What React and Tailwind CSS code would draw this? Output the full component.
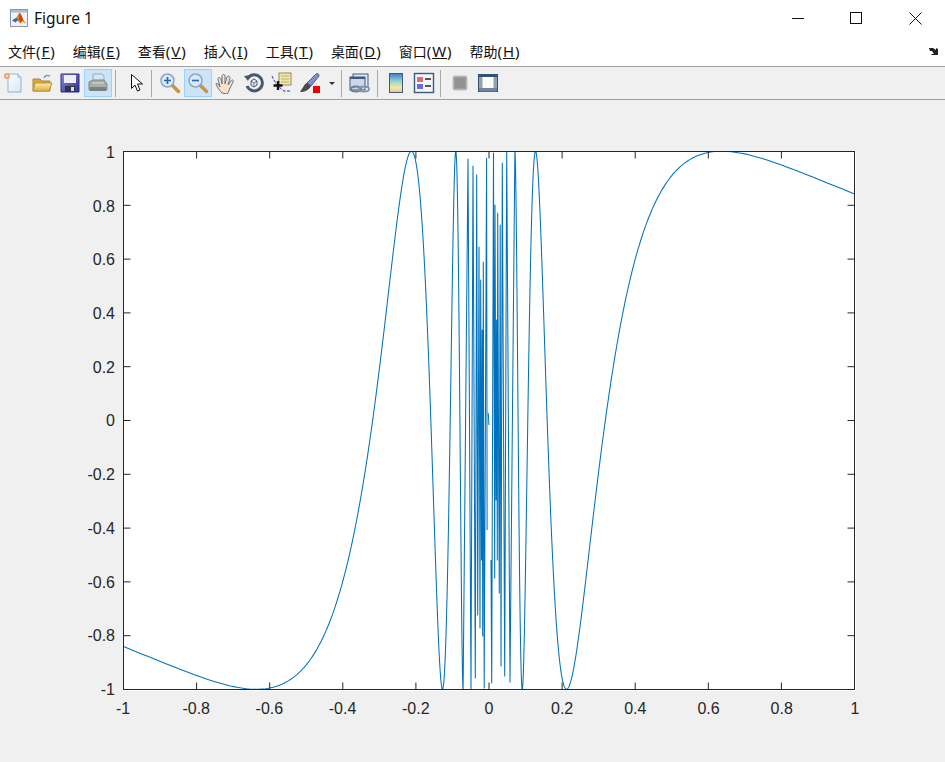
import React from "react";

const MENUS = [["文件", "F"], ["编辑", "E"], ["查看", "V"], ["插入", "I"], ["工具", "T"], ["桌面", "D"], ["窗口", "W"], ["帮助", "H"]];
const XL = ["-1", "-0.8", "-0.6", "-0.4", "-0.2", "0", "0.2", "0.4", "0.6", "0.8", "1"];
const YL = ["1", "0.8", "0.6", "0.4", "0.2", "0", "-0.2", "-0.4", "-0.6", "-0.8", "-1"];

const px = (x) => 123.5 + 365.5 * (x + 1);
const py = (y) => 421.25 - 269 * y;

function side(a, b, n) {
  const pts = [];
  for (let i = 0; i <= n; i++) {
    const u = 1 / a + (1 / b - 1 / a) * (i / n);
    const x = 1 / u;
    pts.push(`${px(x).toFixed(2)},${py(Math.sin(u)).toFixed(2)}`);
  }
  return pts;
}

const fmt = (list) => list.map(([x, y]) => `${x},${y + 1}`);

const LEFT = [
  [468, 159], [471, 689], [473, 166], [475.3, 678], [476.7, 175], [477.7, 615], [479, 247], [480, 628],
  [480.7, 280], [481.5, 560], [482.2, 330], [482.7, 636], [483.3, 262], [484.2, 688], [486.6, 158], [487.1, 530],
];
const RIGHT = [
  [491, 560], [491.7, 683], [493.5, 153], [494.7, 578], [495, 205], [496, 500], [496.6, 320], [497.3, 560],
  [497.7, 213], [498.7, 480], [499.3, 593], [500.2, 225], [501, 666], [502.3, 163], [504.7, 676], [506.7, 150], [510, 682],
];

const CURVE_LEFT = [...side(-1, -0.0708, 700), ...fmt(LEFT)].join(" ");
const CURVE_RIGHT = [...fmt(RIGHT), ...side(0.0708, 1, 700)].join(" ");

function Btn({ active, children }) {
  return (
    <div className={"flex h-[28px] w-[28px] shrink-0 items-center justify-center border " + (active ? "border-[#99d1ff] bg-[#cce4f7]" : "border-transparent")}>
      <svg width="22" height="22" viewBox="0 0 22 22">{children}</svg>
    </div>
  );
}

function Sep({ className }) {
  return <div className={"h-[27px] w-px shrink-0 bg-[#a8a8a8] " + className} />;
}

function Plot() {
  const xt = XL.map((_, i) => 123.5 + i * 73.1);
  const yt = YL.map((_, i) => 152.5 + i * 53.8);
  return (
    <svg width="733" height="540" viewBox="123 152 733 540" className="block shrink-0 bg-white">
      <polyline points={CURVE_LEFT} fill="none" stroke="#0072bd" strokeWidth="1.05" strokeLinejoin="round" />
      <polyline points={CURVE_RIGHT} fill="none" stroke="#0072bd" strokeWidth="1.05" strokeLinejoin="round" />
      <path d="M488.2 414L489 426" fill="none" stroke="#0072bd" strokeWidth="1.05" />
      <rect x="123.5" y="152.5" width="731" height="538" fill="none" stroke="#262626" strokeWidth="1" />
      {xt.map((x, i) => (
        <path key={i} d={`M${x} 152.5v7M${x} 690.5v-7`} stroke="#262626" fill="none" />
      ))}
      {yt.map((y, i) => (
        <path key={i} d={`M123.5 ${y}h7M854.5 ${y}h-7`} stroke="#262626" fill="none" />
      ))}
    </svg>
  );
}

export default function App() {
  return (
    <div className="flex h-[762px] w-[945px] flex-col overflow-hidden bg-[#f0f0f0] font-['Liberation_Sans',sans-serif]">
      <div className="flex h-[40px] shrink-0 items-center bg-white pl-[10px]">
        <svg width="18" height="18" viewBox="0 0 18 18" className="mb-[4px]">
          <rect x="0.5" y="0.5" width="17" height="17" fill="#eef3f9" stroke="#8a97a8" />
          <rect x="1" y="1" width="16" height="2.5" fill="#a9bdd6" />
          <path d="M2 11.5l4-2.5 3.5-5.5 2 3 2 4.5 2.5 4-3.5-2.5-2 2-3-3z" fill="#e8801f" />
          <path d="M2 11.5l4-2.5 2.5 1.5-3 3z" fill="#2f6fb2" />
          <path d="M9.5 3.5l2 3 1.5 4-2 3-2-3z" fill="#c9431c" />
        </svg>
        <span className="ml-[6px] mb-[3px] text-[15.5px] text-[#111] font-['Noto_Sans',sans-serif]">Figure 1</span>
        <div className="ml-auto mb-[4px] flex">
          <div className="flex h-[32px] w-[58px] items-center justify-center">
            <div className="h-px w-[12px] bg-[#111]" />
          </div>
          <div className="flex h-[32px] w-[58px] items-center justify-center">
            <div className="h-[12px] w-[12px] border border-[#111]" />
          </div>
          <div className="flex h-[32px] w-[60px] items-center justify-center">
            <svg width="13" height="13" viewBox="0 0 13 13"><path d="M.5.5l12 12M12.5.5l-12 12" stroke="#111" fill="none" /></svg>
          </div>
        </div>
      </div>

      <div className="flex h-[27px] shrink-0 items-center gap-[17px] border-b border-[#a0a0a0] bg-white pl-[8px] pb-[4px] text-[14px] text-[#111] font-['Noto_Sans','Noto_Sans_CJK_SC',sans-serif]">
        {MENUS.map(([t, k]) => (
          <span key={t} className="whitespace-nowrap">
            {t}
            <span className="text-[15px] tracking-[0.95px]">
              (<span className="underline">{k}</span>)
            </span>
          </span>
        ))}
        <svg width="10" height="8" viewBox="0 0 10 8" className="ml-auto mr-[6px]">
          <path d="M0 1h4l3 2V1l2 1v6H3l-1-1h3L3 4H1z" fill="#222" />
        </svg>
      </div>

      <div className="flex h-[33px] shrink-0 items-center border-b border-[#a0a0a0] bg-[#f0f0f0] text-[0px]">
        <Btn>
          <defs>
            <linearGradient id="pg" x1="0" y1="0" x2="1" y2="1">
              <stop offset="0" stopColor="#ffffff" />
              <stop offset="1" stopColor="#d5e6f7" />
            </linearGradient>
            <linearGradient id="fl" x1="0" y1="0" x2="0" y2="1">
              <stop offset="0" stopColor="#fbeca0" />
              <stop offset="1" stopColor="#e0b040" />
            </linearGradient>
            <linearGradient id="sv" x1="0" y1="0" x2="1" y2="1">
              <stop offset="0" stopColor="#8a8fe0" />
              <stop offset="1" stopColor="#2a2e90" />
            </linearGradient>
          </defs>
          <path d="M5 2h10l3 3v15H5z" fill="url(#pg)" stroke="#8fb3d9" />
          <path d="M15 2v3h3" fill="#dbe9f7" stroke="#8fb3d9" />
          <circle cx="4" cy="4" r="3" fill="#f0a070" />
          <circle cx="4" cy="4" r="1.2" fill="#f9dcc0" />
        </Btn>
        <Btn>
          <path d="M2 7h7l2 2h8v10H2z" fill="#d8a93a" stroke="#a8873a" />
          <path d="M2 19l2-8h17l-3 8z" fill="url(#fl)" stroke="#b8953a" />
          <path d="M13 6c1-3 4-3 6-2" fill="none" stroke="#7f9cb8" strokeWidth="1.5" />
        </Btn>
        <Btn>
          <path d="M2 2h18v18H2z" fill="url(#sv)" stroke="#2d2e7a" />
          <rect x="5" y="3" width="12" height="8" fill="#eeeef6" />
          <rect x="6" y="14" width="10" height="6" fill="#33334a" />
          <rect x="12" y="15" width="3" height="4" fill="#ddd" />
        </Btn>
        <Btn active>
          <path d="M6 2h9l2 2v6H6z" fill="#d6e6f2" stroke="#9aa8b0" />
          <path d="M2 10l4-2h11l3 4v6H2z" fill="#a8adad" stroke="#808484" />
          <path d="M3 15h16v4H3z" fill="#7b8080" />
          <path d="M5 11h12" stroke="#d8dcdc" />
        </Btn>
        <Sep className="ml-[3px] mr-[6px]" />
        <Btn>
          <path d="M6.5 2.5v14l3.5-3.5 2.5 6 2.5-1-2.5-6h5z" fill="#fff" stroke="#111" />
        </Btn>
        <Sep className="ml-[1px] mr-[4px]" />
        <Btn>
          <path d="M12.5 12.5l7 7" stroke="#d0923e" strokeWidth="3.5" strokeLinecap="round" />
          <circle cx="8.5" cy="8.5" r="6.5" fill="#d8e9f8" stroke="#8aa7c4" strokeWidth="1.5" />
          <path d="M5 8.5h7M8.5 5v7" stroke="#2a63a8" strokeWidth="1.6" />
        </Btn>
        <Btn active>
          <path d="M12.5 12.5l7 7" stroke="#d0923e" strokeWidth="3.5" strokeLinecap="round" />
          <circle cx="8.5" cy="8.5" r="6.5" fill="#d8e9f8" stroke="#8aa7c4" strokeWidth="1.5" />
          <path d="M5 8.5h7" stroke="#2a63a8" strokeWidth="1.6" />
        </Btn>
        <Btn>
          <path d="M7 21c-2-2-5-6-6-9 0-1 2-1 3 1l1 2-2-8c0-2 2-2 3 0l1 5 0-8c0-2 3-2 3 0l0 8 2-7c1-2 3-1 3 1l-2 7 3-4c1-2 3-1 2 1l-3 6c-1 3-2 5-3 6z" fill="#fbe0cc" stroke="#6a6f7a" />
        </Btn>
        <Btn>
          <path d="M5 6a8 8 0 1 1-1 8" fill="none" stroke="#47596f" strokeWidth="3" />
          <path d="M1 4l7-1-3 6z" fill="#47596f" />
          <path d="M8 9l3-2 3 2v4l-3 2-3-2z" fill="#e8eef5" stroke="#47596f" />
          <path d="M11 11v4M8 9l3 2 3-2" fill="none" stroke="#47596f" strokeWidth=".8" />
        </Btn>
        <Btn>
          <rect x="8" y="1" width="12" height="12" fill="#f2e9a8" stroke="#8f8a60" />
          <path d="M10 4h8M10 7h8M10 10h8" stroke="#b5ad6d" />
          <path d="M1 4c2 5 6 11 12 15l7 0" fill="none" stroke="#2a2ae0" strokeDasharray="3 1.5" />
          <path d="M7 9v9M2.5 13.5h9" stroke="#111" strokeWidth="2.4" />
        </Btn>
        <Btn>
          <path d="M8 11l9-9c2-1 3 0 3 2l-8 10z" fill="#7f8fd0" stroke="#4f5a8a" />
          <path d="M8 11c-3 1-4 5-7 9 5 0 9-2 11-6z" fill="#4a4a4a" />
          <rect x="14" y="14" width="7" height="7" fill="#ee0000" />
        </Btn>
        <div className="ml-[5px] mr-[3px] w-0 border-x-[3px] border-t-[3px] border-x-transparent border-t-[#333]" />
        <Sep className="ml-[3px] mr-[4px]" />
        <Btn>
          <rect x="4" y="2" width="15" height="13" fill="#dfe8f3" stroke="#3f5a80" />
          <rect x="1" y="5" width="15" height="13" fill="#c9d8ea" stroke="#3f5a80" />
          <path d="M1 5h15v2H1z" fill="#3f5a80" />
          <ellipse cx="7" cy="17" rx="5" ry="2.5" fill="none" stroke="#6d7f96" strokeWidth="2" />
          <ellipse cx="15" cy="17" rx="5" ry="2.5" fill="none" stroke="#8795a8" strokeWidth="2" />
        </Btn>
        <Sep className="ml-[3px] mr-[4px]" />
        <Btn>
          <defs>
            <linearGradient id="cb" x1="0" y1="0" x2="0" y2="1">
              <stop offset="0" stopColor="#3f78d8" />
              <stop offset=".45" stopColor="#9fdcc8" />
              <stop offset=".75" stopColor="#f6e8a0" />
              <stop offset="1" stopColor="#f4b8a0" />
            </linearGradient>
          </defs>
          <rect x="4.5" y="1.5" width="13" height="19" fill="url(#cb)" stroke="#3f5a80" />
        </Btn>
        <Btn>
          <rect x="1.5" y="1.5" width="19" height="19" fill="#f4f6fa" stroke="#3f5a80" strokeWidth="1.4" />
          <rect x="4" y="5" width="6" height="5" fill="#e86a6a" />
          <rect x="4" y="12" width="6" height="5" fill="#6a6ae8" />
          <path d="M12 7h6M12 14h6" stroke="#222" strokeWidth="1.4" />
        </Btn>
        <Sep className="ml-[2px] mr-[5px]" />
        <Btn>
          <rect x="4" y="4" width="14" height="14" rx="1.5" fill="#a0a0a0" stroke="#c4c4c4" />
          <rect x="6" y="6" width="10" height="10" fill="#929292" />
        </Btn>
        <Btn>
          <rect x="1.5" y="2.5" width="19" height="17" fill="#fdfdf8" stroke="#33506f" />
          <rect x="1.5" y="2.5" width="19" height="2.5" fill="#33506f" />
          <rect x="2" y="5" width="3.5" height="11" fill="#8fa2b8" />
          <rect x="16.5" y="5" width="3.5" height="11" fill="#8fa2b8" />
          <rect x="2" y="16" width="18" height="3.5" fill="#6f86a0" />
        </Btn>
      </div>

      <div className="flex flex-col pt-[51px] text-[16px] text-[#262626]">
        <div className="flex">
          <div className="flex h-[540px] w-[123px] shrink-0 flex-col justify-between pb-[1px] pr-[8px] pt-[2px]">
            {YL.map((t) => (
              <div key={t} className="flex h-0 items-center justify-end whitespace-nowrap">{t}</div>
            ))}
          </div>
          <Plot />
        </div>
        <div className="ml-[123px] mt-[6px] flex w-[732px] justify-between">
          {XL.map((t) => (
            <div key={t} className="flex h-[18px] w-0 justify-center whitespace-nowrap">{t}</div>
          ))}
        </div>
      </div>
    </div>
  );
}
